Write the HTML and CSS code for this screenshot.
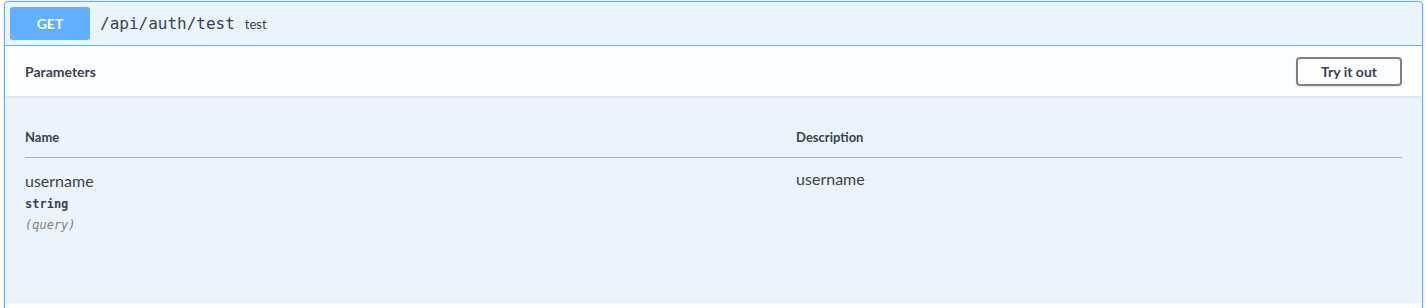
FILE: index.html
```html
<!DOCTYPE html>
<html>
<head>
<meta charset="utf-8">
<link rel="stylesheet" href="styles.css">
</head>
<body>
<div class="wrap">
  <div class="opblock">
    <div class="summary">
      <span class="method">GET</span>
      <span class="path">/api/auth/test</span>
      <span class="summary-desc">test</span>
    </div>
    <div class="section-header">
      <h4 class="title">Parameters</h4>
      <button class="try-out">Try it out</button>
    </div>
    <div class="table-container">
      <table class="params">
        <thead>
          <tr>
            <th class="col-name">Name</th>
            <th class="col-desc">Description</th>
          </tr>
        </thead>
        <tbody>
          <tr>
            <td class="col-name">
              <div class="param-name">username</div>
              <div class="param-type">string</div>
              <div class="param-in">(query)</div>
            </td>
            <td class="col-desc">
              <div class="param-desc">username</div>
            </td>
          </tr>
        </tbody>
      </table>
    </div>
    <div class="section-header section-next"></div>
  </div>
</div>
</body>
</html>
```

FILE: styles.css
```css
html, body {
  margin: 0;
  padding: 0;
  overflow: hidden;
  background: #ffffff;
}

body {
  font-family: Lato, "Open Sans", sans-serif;
  color: #3b4151;
}

.wrap {
  padding: 1px 3px 0 4px;
}

.opblock {
  border: 1px solid #61affe;
  border-radius: 4px;
  background: #ebf3fb;
  box-shadow: 0 0 3px rgba(0, 0, 0, 0.19);
}

.summary {
  display: flex;
  align-items: center;
  padding: 5px;
  border-bottom: 1px solid #61affe;
}

.method {
  min-width: 80px;
  height: 33px;
  box-sizing: border-box;
  padding: 0 15px;
  display: flex;
  align-items: center;
  justify-content: center;
  border-radius: 3px;
  background: #61affe;
  color: #ffffff;
  font-size: 14px;
  font-weight: 700;
  text-shadow: 0 1px 0 rgba(0, 0, 0, 0.1);
}

.path {
  padding: 0 10px;
  font-family: "DejaVu Sans Mono", "Liberation Mono", monospace;
  font-size: 16px;
  font-weight: 400;
  color: #3b4151;
}

.summary-desc {
  font-size: 13px;
  color: #3b4151;
}

.section-header {
  display: flex;
  align-items: center;
  justify-content: space-between;
  min-height: 50px;
  box-sizing: border-box;
  padding: 8px 20px;
  background: rgba(255, 255, 255, 0.8);
  box-shadow: 0 1px 2px rgba(0, 0, 0, 0.1);
}

.title {
  margin: 0;
  font-size: 14px;
  font-weight: 700;
  color: #3b4151;
}

.try-out {
  font-family: Lato, "Open Sans", sans-serif;
  font-size: 14px;
  font-weight: 700;
  line-height: 15px;
  color: #3b4151;
  background: transparent;
  border: 2px solid #808080;
  border-radius: 4px;
  padding: 5px 23px;
  box-shadow: 0 1px 2px rgba(0, 0, 0, 0.1);
}

.table-container {
  padding: 20px 20px 0 20px;
  height: 206px;
  box-sizing: border-box;
  margin-top: 1px;
}

.params {
  width: 100%;
  border-collapse: collapse;
}

.params th {
  text-align: left;
  font-size: 13px;
  font-weight: 700;
  line-height: 16px;
  padding: 12px 0;
  border-bottom: 1px solid rgba(59, 65, 81, 0.2);
  color: #3b4151;
}

.params th.col-name {
  width: 56%;
}

.params td {
  padding: 10px 0;
  vertical-align: top;
}

.param-name {
  font-size: 16px;
  line-height: 24px;
  padding-top: 1px;
}

.param-type {
  font-family: "DejaVu Sans Mono", "Liberation Mono", monospace;
  font-size: 12px;
  font-weight: 600;
  line-height: 14px;
  padding: 4px 0;
}

.param-in {
  font-family: "DejaVu Sans Mono", "Liberation Mono", monospace;
  font-size: 12px;
  font-style: italic;
  line-height: 20px;
  color: #808080;
}

.param-desc {
  font-size: 16px;
  line-height: 22px;
}
```
